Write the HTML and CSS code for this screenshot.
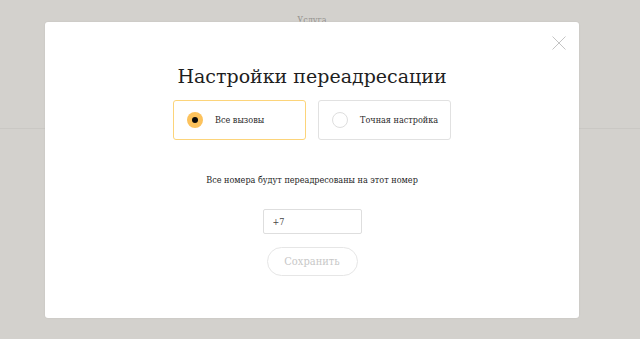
FILE: index.html
```html
<!DOCTYPE html>
<html lang="ru">
<head>
    <meta charset="UTF-8">
    <meta name="viewport" content="width=device-width, initial-scale=1.0">
    <title>Настройки переадресации</title>
    <link rel="stylesheet" href="styles.css">
</head>
<body>
    <div class="stranica">
        <p class="zagolovok_stranicy">Услуга</p>
    </div>

    <section class="okno">
        <button class="zakryt" type="button" aria-label="Закрыть">
            <svg width="14" height="14" viewBox="0 0 14 14">
                <path d="M0.5 0.5 L13.5 13.5 M13.5 0.5 L0.5 13.5" stroke="#c4c4c4" stroke-width="1" fill="none"/>
            </svg>
        </button>

        <h1 class="nazvanie">Настройки переадресации</h1>

        <div class="varianty">
            <label class="variant aktivnyj">
                <span class="krug"></span>
                <span class="podpis">Все вызовы</span>
            </label>
            <label class="variant">
                <span class="krug"></span>
                <span class="podpis">Точная настройка</span>
            </label>
        </div>

        <p class="opisanie">Все номера будут переадресованы на этот номер</p>

        <input class="nomer" type="text" value="+7">

        <input class="btn_sohranit" type="button" value="Сохранить" disabled>
    </section>
</body>
</html>
```

FILE: styles.css
```css
*{
    margin: 0;
    padding: 0;
    box-sizing: border-box;
}
body{
    width: 640px;
    height: 339px;
    background-color: rgb(211, 209, 205);
    font-family: "DejaVu Serif Condensed", "DejaVu Serif", "Liberation Serif", serif;
    overflow: hidden;
}
.stranica{
    height: 129px;
    border-bottom: 1px solid rgb(202, 200, 196);
    padding-top: 15px;
    padding-right: 16px;
    text-align: center;
}
.zagolovok_stranicy{
    font-size: 9px;
    color: rgb(150, 148, 144);
}

.okno{
    position: absolute;
    left: 45px;
    top: 22px;
    width: 534px;
    height: 296px;
    background-color: #fff;
    border-radius: 3px;
    box-shadow: 0 0 2px rgba(0,0,0,0.08);
    display: flex;
    flex-direction: column;
    align-items: center;
    padding-top: 43px;
}
.zakryt{
    position: absolute;
    top: 14px;
    right: 13px;
    width: 14px;
    height: 14px;
    border: none;
    background: none;
    cursor: pointer;
    display: flex;
}
.nazvanie{
    font-family: "DejaVu Serif", "Liberation Serif", serif;
    font-size: 19px;
    line-height: 23px;
    font-weight: normal;
    color: rgb(30, 30, 30);
}
.varianty{
    display: flex;
    gap: 12px;
    margin-top: 12px;
}
.variant{
    width: 133px;
    height: 40px;
    border: 1px solid rgb(225, 225, 225);
    border-radius: 3px;
    display: flex;
    align-items: center;
    padding-left: 13px;
    cursor: pointer;
}
.variant.aktivnyj{
    border-color: rgb(252, 212, 122);
}
.krug{
    width: 16px;
    height: 16px;
    border-radius: 50%;
    border: 1px solid rgb(222, 222, 222);
    display: flex;
    justify-content: center;
    align-items: center;
    flex-shrink: 0;
}
.variant.aktivnyj .krug{
    border: none;
    background-color: rgb(252, 194, 92);
}
.variant.aktivnyj .krug::after{
    content: "";
    width: 6px;
    height: 6px;
    border-radius: 50%;
    background-color: rgb(10, 10, 10);
}
.podpis{
    font-size: 9px;
    color: rgb(40, 40, 40);
    margin-left: 12px;
}
.opisanie{
    font-size: 9px;
    line-height: 12px;
    color: rgb(30, 30, 30);
    margin-top: 34px;
}
.nomer{
    width: 99px;
    height: 25px;
    margin-top: 23px;
    border: 1px solid rgb(222, 222, 222);
    border-radius: 2px;
    padding-left: 9px;
    font-family: "DejaVu Serif Condensed", "DejaVu Serif", serif;
    font-size: 9px;
    color: rgb(70, 70, 70);
    outline: none;
}
.btn_sohranit{
    width: 91px;
    height: 29px;
    margin-top: 13px;
    border: 1px solid rgb(230, 230, 230);
    border-radius: 15px;
    background-color: #fff;
    font-family: "DejaVu Serif Condensed", "DejaVu Serif", serif;
    font-size: 11px;
    color: rgb(200, 200, 200);
}
```
